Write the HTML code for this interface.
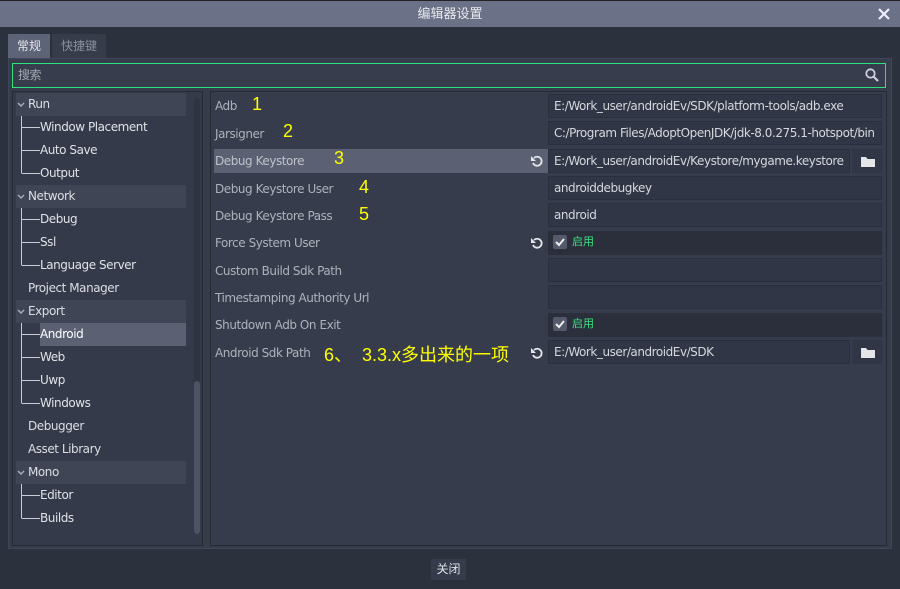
<!DOCTYPE html><html><head><meta charset="utf-8"><style>
*{margin:0;padding:0;box-sizing:border-box}
body{width:900px;height:589px;background:#2c313e;font-family:"DejaVu Sans","Liberation Sans","Noto Sans CJK SC",sans-serif;font-size:12px;letter-spacing:-0.45px;color:#d0d3da;position:relative;overflow:hidden}
.a{position:absolute}
.title{left:0;top:0;width:900px;height:27px;background:#6b7186;text-align:center;line-height:27px;font-size:13px;color:#e8e9ee;border-top:1px solid #222;letter-spacing:0}
.tab{top:34px;height:24px;line-height:24px;text-align:center;font-size:12px;letter-spacing:0}
.panel{left:8px;top:58px;width:884px;height:491px;background:#363d4a;border:1px solid #404659}
.search{left:12px;top:63px;width:874px;height:25px;border:1px solid #2fe07d;background:#373d4c;color:#a5a9b3;line-height:23px;padding-left:5px}
.left{left:12px;top:91px;width:191px;height:455px;background:#343a49;border:1px solid #252a35}
.right{left:210px;top:91px;width:677px;height:455px;background:#363c4b;border:1px solid #252a35}
.tr{position:absolute;left:0;height:23px;line-height:23px;font-size:12px;color:#dcdee3;white-space:nowrap}
.hd{background:#3f4555;left:3px;width:170px;padding-left:12px}
.ch{left:27px;color:#e0e2e7}
.lab{left:215px;font-size:12px;color:#aeb2bb;height:24px;line-height:24px}
.val{left:548px;width:334px;height:24px;background:#303645;border:1px solid #2a2f3c;line-height:22px;padding-left:5px;color:#d6d8de;font-size:12px;white-space:nowrap;overflow:hidden}
.ann{color:#ffff00;font-size:18px;letter-spacing:0;font-family:"Liberation Sans","Noto Sans CJK SC",sans-serif}
.rs{left:530px;width:14px;height:14px}
.fold{left:852px;width:30px;height:24px;background:#303645}
</style></head><body>
<div class="a title">编辑器设置</div>
<svg class="a" style="left:877px;top:7px" width="14" height="14"><path d="M2 2L12 12M12 2L2 12" stroke="#eef" stroke-width="2.2"/></svg>
<div class="a tab" style="left:8px;width:42px;background:#5e6478;color:#e6e7ec">常规</div>
<div class="a tab" style="left:52px;width:54px;background:#363c4a;color:#8a8f9b">快捷键</div>
<div class="a panel"></div>
<div class="a search">搜索</div>
<svg class="a" style="left:864px;top:67px" width="16" height="16"><circle cx="6.5" cy="6.5" r="4.2" stroke="#ccd" stroke-width="1.8" fill="none"/><path d="M9.5 9.5L14 14" stroke="#ccd" stroke-width="2.2"/></svg>
<div class="a left">
<div style="position:absolute;left:181px;top:6px;width:6px;height:436px;background:#2e3441;border-radius:3px"></div>
<div style="position:absolute;left:181px;top:289px;width:6px;height:153px;background:#4d5364;border-radius:3px"></div>
<div class="tr hd" style="top:1px">Run</div>
<div class="tr ch" style="top:24px">Window Placement</div>
<div class="tr ch" style="top:47px">Auto Save</div>
<div class="tr ch" style="top:70px">Output</div>
<div class="tr hd" style="top:93px">Network</div>
<div class="tr ch" style="top:116px">Debug</div>
<div class="tr ch" style="top:139px">Ssl</div>
<div class="tr ch" style="top:162px">Language Server</div>
<div class="tr" style="top:185px;left:15px">Project Manager</div>
<div class="tr hd" style="top:208px">Export</div>
<div class="tr ch" style="top:231px;background:#5b6173;width:146px;color:#fff">Android</div>
<div class="tr ch" style="top:254px">Web</div>
<div class="tr ch" style="top:277px">Uwp</div>
<div class="tr ch" style="top:300px">Windows</div>
<div class="tr" style="top:323px;left:15px">Debugger</div>
<div class="tr" style="top:346px;left:15px">Asset Library</div>
<div class="tr hd" style="top:369px">Mono</div>
<div class="tr ch" style="top:392px">Editor</div>
<div class="tr ch" style="top:415px">Builds</div>
<svg style="position:absolute;left:0;top:0" width="180" height="440" stroke="#c9ccd3" stroke-width="1" fill="none">
<path d="M8.5 24V81M8.5 35.5H27M8.5 58.5H27M8.5 81.5H27"/>
<path d="M8.5 116V173M8.5 127.5H27M8.5 150.5H27M8.5 173.5H27"/>
<path d="M8.5 231V311M8.5 242.5H27M8.5 265.5H27M8.5 288.5H27M8.5 311.5H27"/>
<path d="M8.5 392V426M8.5 403.5H27M8.5 426.5H27"/>
<path d="M5 11l3 3 3-3M5 103l3 3 3-3M5 218l3 3 3-3M5 379l3 3 3-3" stroke="#aab" stroke-width="1.5"/>
</svg>
</div>
<div class="a right"></div>
<div class="a" style="left:214px;top:149px;width:334px;height:24px;background:#5b6173"></div>
<div class="a lab" style="top:94px">Adb</div><div class="a ann" style="left:252px;top:94px">1</div>
<div class="a lab" style="top:122px">Jarsigner</div><div class="a ann" style="left:283px;top:121px">2</div>
<div class="a lab" style="top:149px;color:#bfc2ca">Debug Keystore</div><div class="a ann" style="left:334px;top:148px">3</div>
<div class="a lab" style="top:177px">Debug Keystore User</div><div class="a ann" style="left:359px;top:177px">4</div>
<div class="a lab" style="top:204px">Debug Keystore Pass</div><div class="a ann" style="left:359px;top:204px">5</div>
<div class="a lab" style="top:231px">Force System User</div>
<div class="a lab" style="top:259px">Custom Build Sdk Path</div>
<div class="a lab" style="top:286px">Timestamping Authority Url</div>
<div class="a lab" style="top:313px">Shutdown Adb On Exit</div>
<div class="a lab" style="top:341px">Android Sdk Path</div><div class="a ann" style="left:324px;top:341px">6、&nbsp;&nbsp;3.3.x多出来的一项</div>
<div class="a val" style="top:94px">E:/Work_user/androidEv/SDK/platform-tools/adb.exe</div>
<div class="a val" style="top:121px">C:/Program Files/AdoptOpenJDK/jdk-8.0.275.1-hotspot/bin</div>
<div class="a val" style="top:149px;width:302px">E:/Work_user/androidEv/Keystore/mygame.keystore</div>
<div class="a val" style="top:176px">androiddebugkey</div>
<div class="a val" style="top:203px">android</div>
<div class="a val" style="top:231px;background:#2a2f3b;border-color:#2a2f3b"></div>
<div class="a val" style="top:258px"></div>
<div class="a val" style="top:285px"></div>
<div class="a val" style="top:313px;background:#2a2f3b;border-color:#2a2f3b"></div>
<div class="a val" style="top:340px;width:302px">E:/Work_user/androidEv/SDK</div>
<div class="a fold" style="top:149px"></div><div class="a fold" style="top:340px"></div>
<svg class="a" style="left:860px;top:155px" width="16" height="12"><path d="M1 2h5l1.5 2H15v8H1z" fill="#e4e6ea"/></svg>
<svg class="a" style="left:860px;top:346px" width="16" height="12"><path d="M1 2h5l1.5 2H15v8H1z" fill="#e4e6ea"/></svg>
<svg class="a rs" style="top:154px" viewBox="0 0 14 14"><path d="M4 4A4.5 4.5 0 1 1 3 9" stroke="#e4e6ea" stroke-width="1.8" fill="none"/><path d="M1 2v5h5z" fill="#e4e6ea"/></svg>
<svg class="a rs" style="top:236px" viewBox="0 0 14 14"><path d="M4 4A4.5 4.5 0 1 1 3 9" stroke="#e4e6ea" stroke-width="1.8" fill="none"/><path d="M1 2v5h5z" fill="#e4e6ea"/></svg>
<svg class="a rs" style="top:346px" viewBox="0 0 14 14"><path d="M4 4A4.5 4.5 0 1 1 3 9" stroke="#e4e6ea" stroke-width="1.8" fill="none"/><path d="M1 2v5h5z" fill="#e4e6ea"/></svg>
<div class="a" style="left:553px;top:235px;width:14px;height:14px;background:#545a6b;border-radius:2px"></div>
<svg class="a" style="left:554px;top:236px" width="12" height="12"><path d="M2 6l3 3 5-6" stroke="#eee" stroke-width="2" fill="none"/></svg>
<div class="a" style="left:572px;top:234px;color:#3fe27f;font-size:11px;line-height:16px;letter-spacing:0">启用</div>
<div class="a" style="left:553px;top:317px;width:14px;height:14px;background:#545a6b;border-radius:2px"></div>
<svg class="a" style="left:554px;top:318px" width="12" height="12"><path d="M2 6l3 3 5-6" stroke="#eee" stroke-width="2" fill="none"/></svg>
<div class="a" style="left:572px;top:316px;color:#3fe27f;font-size:11px;line-height:16px;letter-spacing:0">启用</div>
<div class="a" style="left:431px;top:559px;width:35px;height:21px;background:#363c4b;text-align:center;line-height:21px;font-size:12px;letter-spacing:0;color:#e0e2e6">关闭</div>
</body></html>
